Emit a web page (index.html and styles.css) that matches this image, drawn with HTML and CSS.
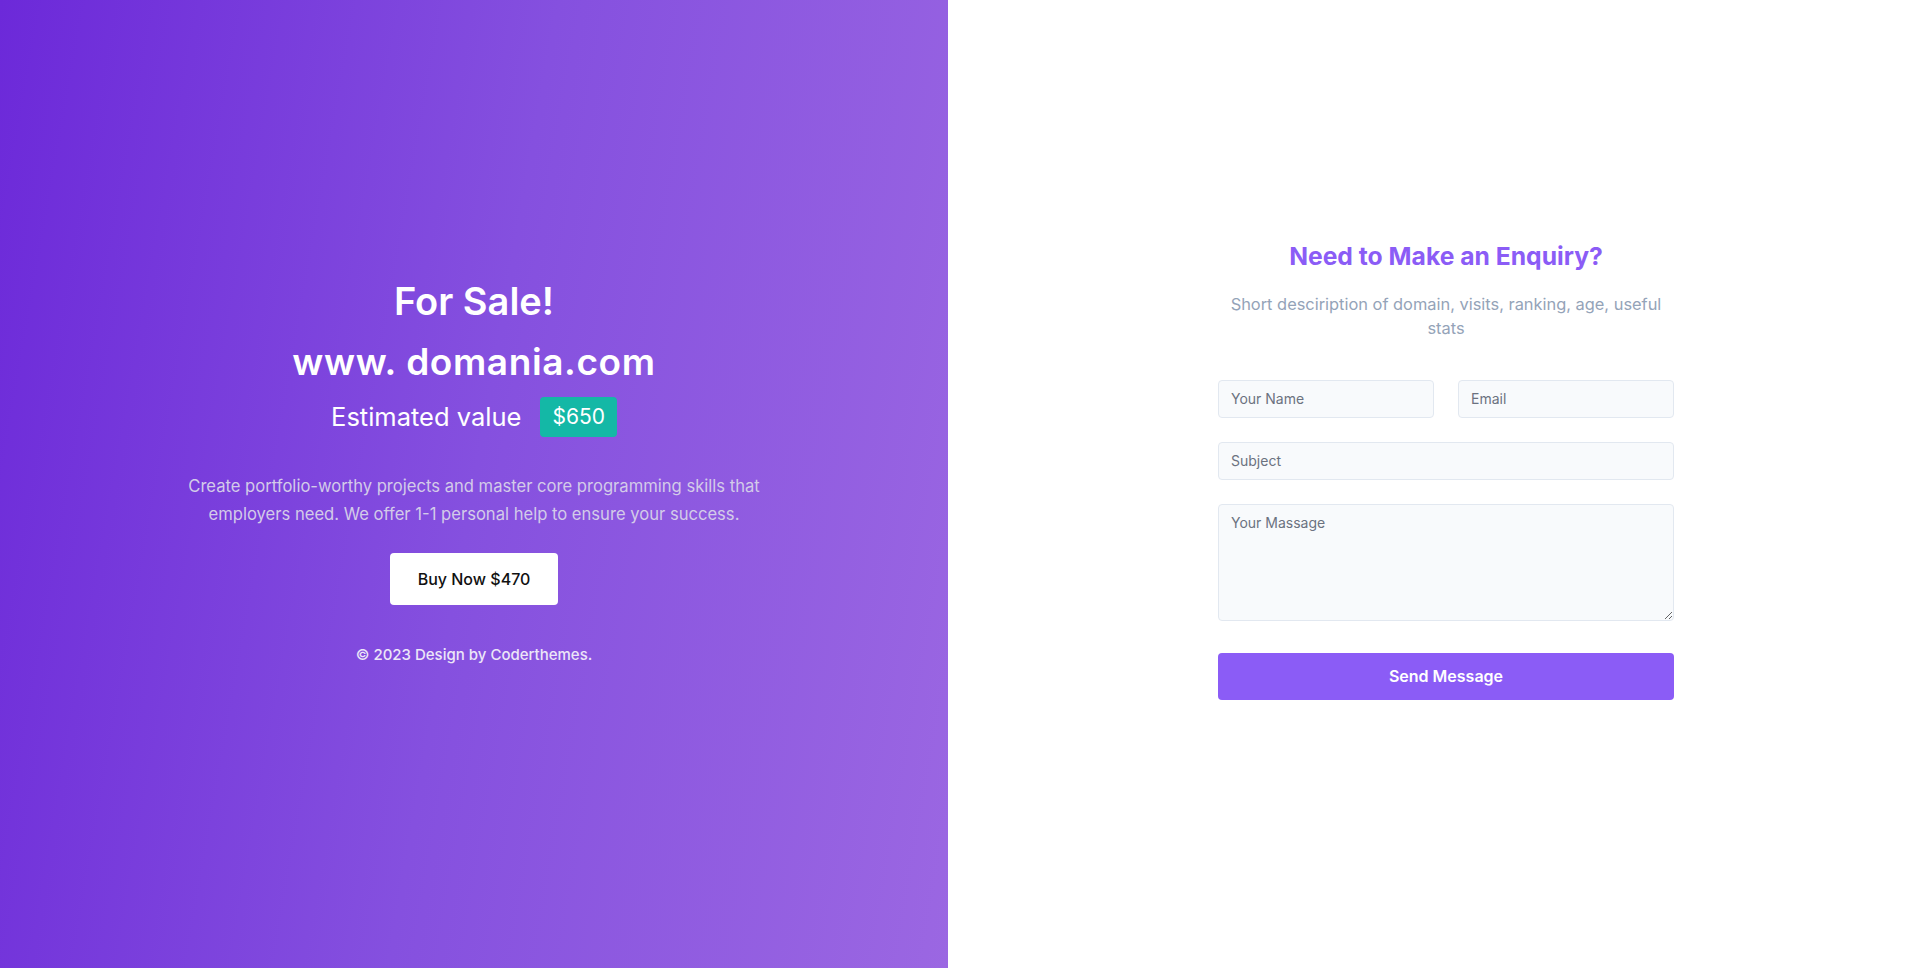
FILE: index.html
```html
<!DOCTYPE html>
<html lang="en">
<head>
<meta charset="utf-8">
<title>For Sale - domania.com</title>
<link rel="stylesheet" href="styles.css">
</head>
<body>
<div class="page">
  <section class="hero">
    <div class="hero-inner">
      <h1 class="hero-title">For Sale!</h1>
      <h1 class="hero-domain">www. domania.com</h1>
      <div class="estimate">
        <span class="estimate-label">Estimated value</span>
        <span class="estimate-badge">$650</span>
      </div>
      <p class="hero-text">Create portfolio-worthy projects and master core programming skills that employers need. We offer 1-1 personal help to ensure your success.</p>
      <a class="buy-btn" href="#">Buy Now $470</a>
      <p class="copyright">© 2023 Design by Coderthemes.</p>
    </div>
  </section>
  <section class="enquiry">
    <div class="enquiry-inner">
      <h2 class="enquiry-title">Need to Make an Enquiry?</h2>
      <p class="enquiry-desc">Short desciription of domain, visits, ranking, age, useful stats</p>
      <form class="enquiry-form">
        <div class="form-row">
          <input class="field" type="text" placeholder="Your Name">
          <input class="field" type="email" placeholder="Email">
        </div>
        <input class="field" type="text" placeholder="Subject">
        <textarea class="field field-area" placeholder="Your Massage"></textarea>
        <button class="send-btn" type="button">Send Message</button>
      </form>
    </div>
  </section>
</div>
</body>
</html>
```

FILE: styles.css
```css
* { box-sizing: border-box; }

html, body {
  margin: 0;
  padding: 0;
}

body {
  font-family: Inter, "Open Sans", "Liberation Sans", sans-serif;
  background: #ffffff;
  color: #1f2937;
}

.page {
  display: grid;
  grid-template-columns: 948px 1fr;
  height: 968px;
}

.hero {
  background: linear-gradient(100deg, #6c29d9 0%, #8550df 50%, #9b67e2 100%);
  display: flex;
  align-items: center;
  justify-content: center;
  padding-bottom: 24px;
}

.hero-inner {
  display: flex;
  flex-direction: column;
  align-items: center;
  text-align: center;
}

.hero-title,
.hero-domain {
  margin: 0;
  color: #ffffff;
  font-size: 38px;
  font-weight: 600;
  line-height: 44px;
}

.hero-domain {
  margin-top: 17px;
  font-size: 37px;
  letter-spacing: 0.6px;
}

.estimate {
  display: flex;
  align-items: center;
  gap: 19px;
  margin-top: 13px;
}

.estimate-label {
  color: #ffffff;
  font-size: 25.5px;
  font-weight: 400;
}

.estimate-badge {
  background: #14b8a6;
  color: #ffffff;
  font-size: 21px;
  line-height: 24px;
  padding: 8px 12px;
  border-radius: 4px;
}

.hero-text {
  margin: 35px 0 0;
  width: 610px;
  color: #d3cbe9;
  font-size: 16.6px;
  line-height: 28px;
}

.buy-btn {
  margin-top: 25px;
  display: inline-block;
  background: #ffffff;
  color: #111111;
  font-size: 16px;
  font-weight: 500;
  line-height: 24px;
  padding: 14px 28px;
  border-radius: 4px;
  text-decoration: none;
}

.copyright {
  margin: 39px 0 0;
  color: #ece6f8;
  font-size: 15px;
  font-weight: 500;
  line-height: 22px;
}

.enquiry {
  display: flex;
  align-items: center;
  justify-content: center;
  padding-left: 24px;
  padding-bottom: 28px;
}

.enquiry-inner {
  width: 456px;
  text-align: center;
}

.enquiry-title {
  margin: 0;
  color: #8b5cf6;
  font-size: 24.7px;
  font-weight: 700;
  line-height: 30px;
}

.enquiry-desc {
  margin: 21px 0 0;
  color: #94a3b8;
  font-size: 16.4px;
  line-height: 24px;
}

.enquiry-form {
  margin-top: 40px;
  display: flex;
  flex-direction: column;
  gap: 24px;
}

.form-row {
  display: grid;
  grid-template-columns: 1fr 1fr;
  gap: 24px;
}

.field {
  display: block;
  width: 100%;
  height: 38px;
  padding: 8px 12px;
  background: #f8fafc;
  border: 1px solid #e2e8f0;
  border-radius: 4px;
  font-family: inherit;
  font-size: 14px;
  line-height: 20px;
  color: #374151;
  outline: none;
}

.field::placeholder {
  color: #6b7280;
}

.field-area {
  height: 117px;
  resize: vertical;
}

.send-btn {
  margin-top: 8px;
  height: 47px;
  width: 100%;
  border: none;
  border-radius: 4px;
  background: #8b5cf6;
  color: #ffffff;
  font-family: inherit;
  font-size: 16px;
  font-weight: 600;
}
```
